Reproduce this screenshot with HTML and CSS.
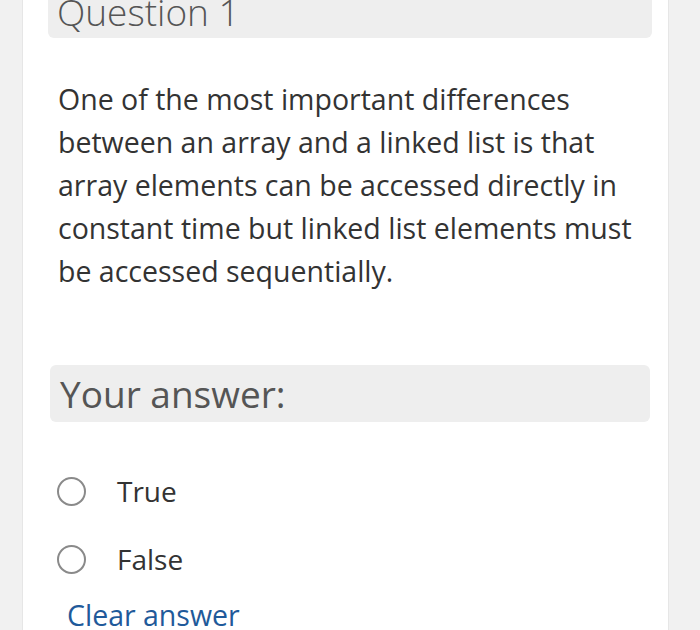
FILE: index.html
```html
<!DOCTYPE html>
<html>
<head>
<meta charset="utf-8">
<link rel="stylesheet" href="styles.css">
</head>
<body>
<div class="card">
  <div class="q-header"><span class="q-title">Question 1</span></div>
  <p class="q-text">One of the most important differences between an array and a linked list is that array elements can be accessed directly in constant time but linked list elements must be accessed sequentially.</p>
  <div class="answer-box"><span class="answer-label">Your answer:</span></div>
  <div class="options">
    <label class="option"><span class="radio"></span><span class="opt-text">True</span></label>
    <label class="option"><span class="radio"></span><span class="opt-text">False</span></label>
  </div>
  <a class="clear" href="#">Clear answer</a>
</div>
</body>
</html>
```

FILE: styles.css
```css
html, body {
  margin: 0;
  padding: 0;
  background: #f1f1f1;
  font-family: "Open Sans", "Noto Sans", sans-serif;
  overflow: hidden;
  height: 630px;
}
.card {
  margin: -30px 0 0 22px;
  width: 647px;
  background: #fff;
  border-left: 1px solid #e6e6e6;
  border-right: 1px solid #e6e6e6;
  padding: 0 0 40px 25px;
  box-sizing: border-box;
  min-height: 700px;
}
.q-header {
  width: 604px;
  height: 68px;
  background: #eeeeee;
  border-radius: 0 0 6px 6px;
  box-sizing: border-box;
  padding-left: 9px;
  display: flex;
  align-items: flex-end;
  padding-bottom: 6px;
}
.q-title {
  font-size: 37px;
  font-weight: 300;
  color: #555;
  line-height: 40px;
}
.q-text {
  margin: 40px 0 0 10px;
  width: 600px;
  font-size: 28.5px;
  line-height: 43px;
  color: #333;
}
.answer-box {
  margin: 72px 0 0 2px;
  width: 600px;
  height: 57px;
  background: #eeeeee;
  border-radius: 6px;
  box-sizing: border-box;
  padding-left: 10px;
  display: flex;
  align-items: center;
}
.answer-label {
  font-size: 37px;
  font-weight: 400;
  color: #555;
}
.options {
  margin-top: 55px;
  display: flex;
  flex-direction: column;
  gap: 40px;
}
.option {
  display: flex;
  align-items: center;
  height: 28px;
  padding-left: 9px;
}
.radio {
  width: 29px;
  height: 29px;
  border: 2px solid #8a8a8a;
  border-radius: 50%;
  box-sizing: border-box;
  flex: none;
}
.opt-text {
  margin-left: 31px;
  font-size: 28px;
  color: #333;
}
.clear {
  display: inline-block;
  margin: 23px 0 0 19px;
  font-size: 28.5px;
  color: #1f5a9a;
  text-decoration: none;
}
```
